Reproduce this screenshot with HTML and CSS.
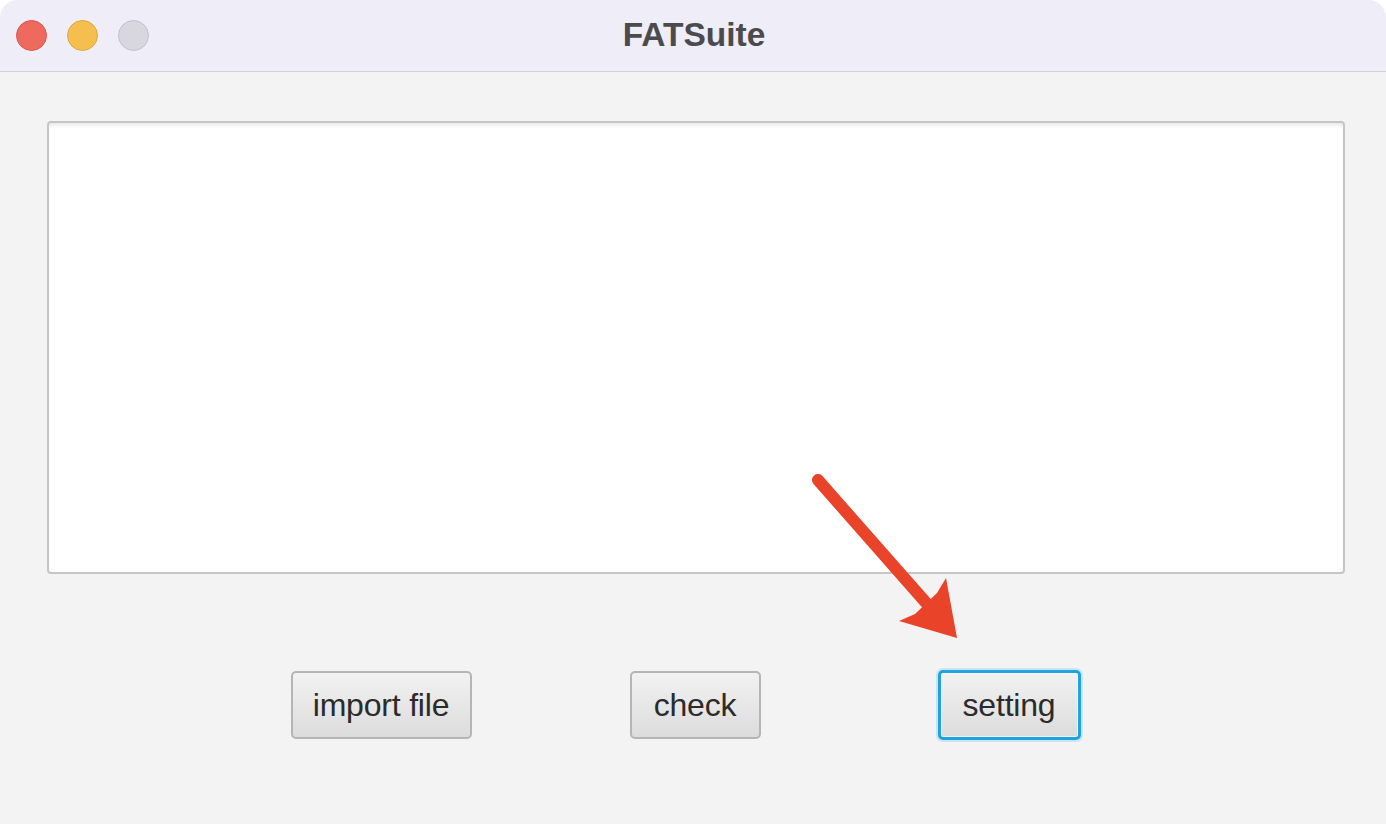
FILE: index.html
```html
<!DOCTYPE html>
<html>
<head>
<meta charset="utf-8">
<title>FATSuite</title>
<link rel="stylesheet" href="styles.css">
</head>
<body>
<div class="window">
  <header class="titlebar">
    <div class="lights">
      <span class="light red"></span>
      <span class="light yellow"></span>
      <span class="light grey"></span>
    </div>
    <div class="title">FATSuite</div>
  </header>
  <main class="content">
    <div class="textarea"></div>
    <div class="buttons">
      <div class="cell"><button class="btn btn-import">import file</button></div>
      <div class="cell"><button class="btn btn-check">check</button></div>
      <div class="cell"><button class="btn btn-setting focused">setting</button></div>
    </div>
    <svg class="arrow" width="160" height="180" viewBox="0 0 160 180">
      <line x1="8" y1="8" x2="118" y2="133" stroke="#e9432a" stroke-width="12" stroke-linecap="round"/>
      <polygon points="147,166 89,149 105,142 127,121 136,106" fill="#e9432a"/>
    </svg>
  </main>
</div>
</body>
</html>
```

FILE: styles.css
```css
* { box-sizing: border-box; }
html, body { margin: 0; padding: 0; background: #ffffff; }
body { width: 1386px; height: 824px; overflow: hidden; font-family: "Liberation Sans", Arial, sans-serif; }

.window {
  width: 1386px;
  height: 824px;
  background: #f3f3f3;
  border-top-left-radius: 18px;
  border-top-right-radius: 18px;
  overflow: hidden;
  display: flex;
  flex-direction: column;
}

.titlebar {
  height: 72px;
  flex: none;
  background: #efedf7;
  border-bottom: 1px solid #d2d1d6;
  display: grid;
  grid-template-columns: 1fr;
  align-items: center;
}
.titlebar > * { grid-area: 1 / 1; }

.lights {
  display: flex;
  gap: 20px;
  padding-left: 16px;
  align-items: center;
  margin-top: -1px;
}
.light {
  width: 31px;
  height: 31px;
  border-radius: 50%;
  display: block;
}
.red { background: #ee6a5f; border: 1px solid #d9574d; }
.yellow { background: #f5bf4f; border: 1px solid #dea83c; }
.grey { background: #d8d6de; border: 1px solid #c3c1ca; }

.title {
  text-align: center;
  font-weight: bold;
  font-size: 33.5px;
  color: #4b4b4d;
  margin-top: -2px;
  padding-left: 2px;
}

.content {
  position: relative;
  flex: 1;
  padding: 49px 41px 0 47px;
}

.textarea {
  height: 453px;
  background: #ffffff;
  border: 2px solid #c6c6c6;
  border-radius: 4px;
  box-shadow: inset 0 4px 4px -2px rgba(0,0,0,0.10);
}

.buttons {
  margin-top: 96px;
  display: grid;
  grid-template-columns: 314px 314px 314px;
  justify-content: center;
  margin-left: -43px;
  margin-right: -41px;
  align-items: center;
}
.cell { display: flex; justify-content: center; }

.btn {
  height: 68px;
  font-family: "Liberation Sans", Arial, sans-serif;
  font-size: 32px;
  letter-spacing: -0.2px;
  color: #2b2b2b;
  background: linear-gradient(#f2f2f2, #dcdcdc);
  border: 2px solid #b5b5b5;
  border-radius: 5px;
  padding: 0;
  cursor: default;
}
.btn-import { width: 181px; }
.btn-check { width: 131px; }
.btn-setting { width: 143px; height: 70px; }
.focused {
  border: 3px solid #1ea3e0;
  box-shadow: 0 0 0 2px rgba(30,163,224,0.18), inset 0 0 0 1px rgba(255,255,255,0.6);
}

.arrow {
  position: absolute;
  left: 810px;
  top: 400px;
}
```
